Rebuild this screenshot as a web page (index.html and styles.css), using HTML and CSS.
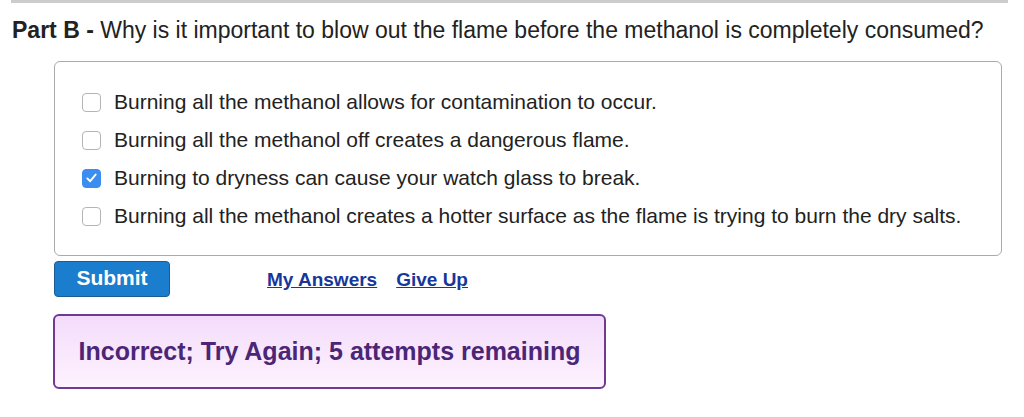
FILE: index.html
```html
<!DOCTYPE html>
<html>
<head>
<meta charset="utf-8">
<link rel="stylesheet" href="styles.css">
</head>
<body>
<div class="page">
  <div class="topbar"></div>
  <h2 class="question"><span class="part">Part B -</span> Why is it important to blow out the flame before the methanol is completely consumed?</h2>
  <div class="answers">
    <label class="option"><span class="cb"></span><span>Burning all the methanol allows for contamination to occur.</span></label>
    <label class="option"><span class="cb"></span><span>Burning all the methanol off creates a dangerous flame.</span></label>
    <label class="option"><span class="cb checked"><svg viewBox="0 0 18 18" width="18" height="18"><path d="M4.6 9.4 L7.6 12.4 L13.4 5.4" fill="none" stroke="#fff" stroke-width="2" stroke-linecap="round" stroke-linejoin="round"/></svg></span><span>Burning to dryness can cause your watch glass to break.</span></label>
    <label class="option"><span class="cb"></span><span>Burning all the methanol creates a hotter surface as the flame is trying to burn the dry salts.</span></label>
  </div>
  <div class="actions">
    <button class="submit">Submit</button>
    <div class="links">
      <a href="#" class="link">My Answers</a>
      <a href="#" class="link">Give Up</a>
    </div>
  </div>
  <div class="feedback">Incorrect; Try Again; 5 attempts remaining</div>
</div>
</body>
</html>
```
FILE: styles.css
```css
html, body {
  margin: 0;
  padding: 0;
  background: #fff;
}
body {
  font-family: "Liberation Sans", Arial, sans-serif;
  color: #222;
}
.page {
  padding: 0 0 0 11px;
  width: 997px;
}
.topbar {
  height: 3px;
  background: #cccccc;
}
.question {
  margin: 14px 0 0 1px;
  font-size: 23px;
  font-weight: normal;
  line-height: 26px;
  color: #222;
}
.part {
  font-weight: bold;
}
.answers {
  margin: 18px 0 0 43px;
  width: 946px;
  border: 1px solid #aaa;
  border-radius: 6px;
  padding: 21px 0 20px 0;
}
.option {
  display: flex;
  align-items: center;
  height: 38px;
  font-size: 21px;
  color: #222;
  padding-left: 27px;
}
.cb {
  width: 17px;
  height: 17px;
  border: 1px solid #b5b5b5;
  border-radius: 4px;
  background: #fff;
  margin-right: 13px;
  display: flex;
  align-items: center;
  justify-content: center;
  box-sizing: content-box;
  flex: none;
}
.cb.checked {
  background: #3b8ef0;
  border-color: #3b8ef0;
}
.cb svg {
  display: block;
}
.actions {
  display: flex;
  align-items: center;
  margin: 5px 0 0 43px;
}
.submit {
  width: 116px;
  height: 36px;
  background: #1a7dce;
  border: 1px solid #1c5c8e;
  border-radius: 4px;
  color: #fff;
  font-family: "Liberation Sans", Arial, sans-serif;
  font-weight: bold;
  font-size: 21px;
  padding: 0 0 2px 0;
}
.links {
  display: flex;
  gap: 19px;
  margin-left: 97px;
  padding-top: 2px;
}
.link {
  color: #17379a;
  font-weight: bold;
  font-size: 19px;
  text-decoration: underline;
}
.feedback {
  margin: 17px 0 0 42px;
  width: 553px;
  height: 75px;
  box-sizing: border-box;
  border: 2px solid #6e3a92;
  border-radius: 6px;
  background: linear-gradient(to bottom, #f3dcfb, #fef2fe);
  color: #4b2677;
  font-weight: bold;
  font-size: 25px;
  display: flex;
  align-items: center;
  justify-content: center;
}
```
